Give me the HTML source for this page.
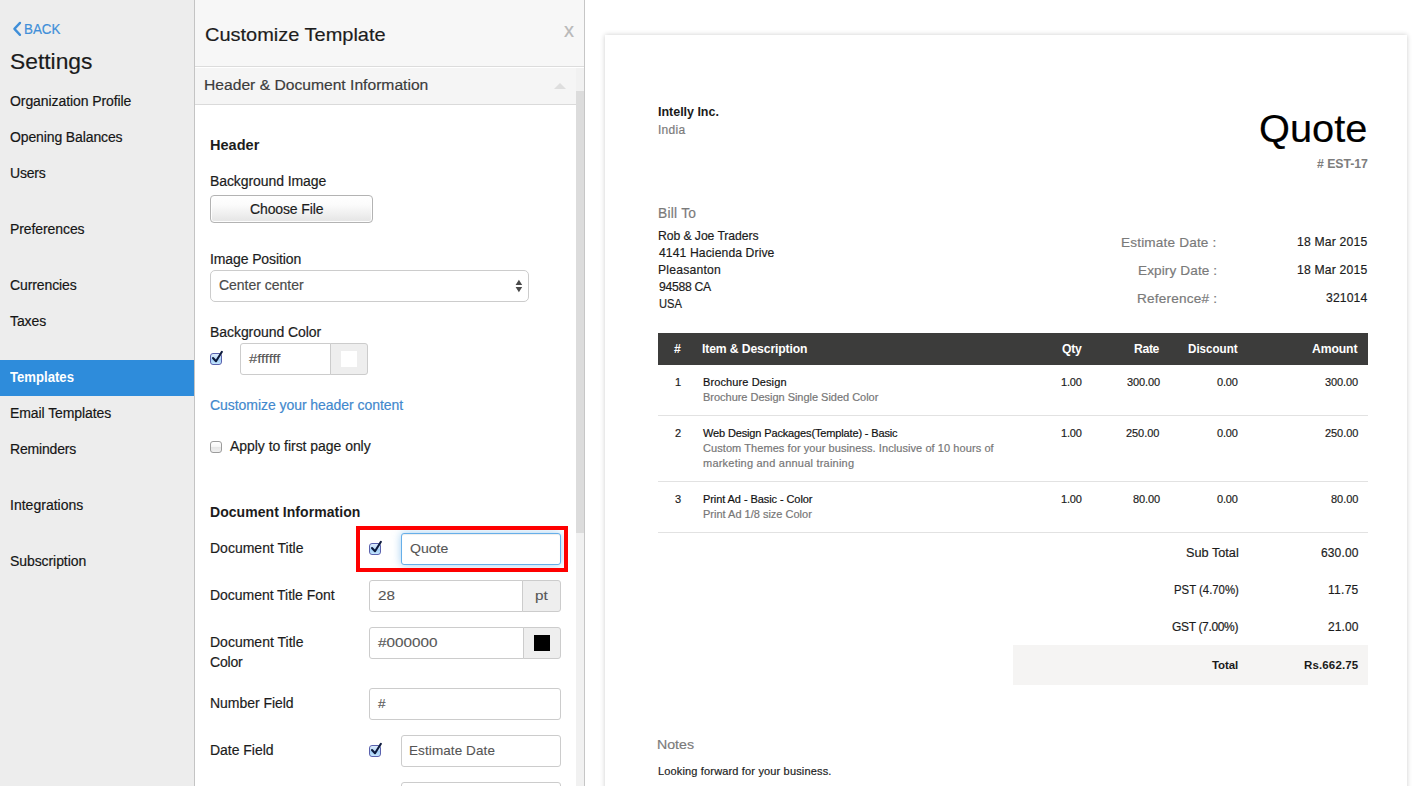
<!DOCTYPE html>
<html>
<head>
<meta charset="utf-8">
<title>Customize Template</title>
<style>
*{box-sizing:border-box;margin:0;padding:0}
html,body{width:1425px;height:786px;overflow:hidden;background:#fff}
body{font-family:"Liberation Sans",sans-serif;font-size:14px;line-height:20px;color:#222;position:relative}
div,svg{position:absolute}
.t{white-space:nowrap;line-height:20px;height:20px;transform-origin:0 0;-webkit-text-stroke:0.18px}
.inp{height:32px;border:1px solid #ccc;background:#fff;border-radius:3px}
.addon{height:32px;border:1px solid #ccc;background:#eee;border-radius:0 3px 3px 0}
.cb{width:12px;height:12px;border:1px solid #9c9c9c;border-radius:3px;background:linear-gradient(#ffffff 0%,#f6f6f6 45%,#e6e6e6 55%,#f0f0f0 100%)}
.cb.on{border-color:#5a62ae;background:linear-gradient(#dcebfb 0%,#b9dafa 50%,#a3d0f8 55%,#c4e6fd 100%)}
.cb svg{left:-1px;top:-1px;overflow:visible}
</style>
</head>
<body>
<!-- sidebar -->
<div style="left:0;top:0;width:194px;height:786px;background:#ededed"></div>
<div style="left:194px;top:0;width:1px;height:786px;background:#c4c4c4"></div>
<div style="left:0;top:360px;width:194px;height:36px;background:#2e8cdb"></div>
<svg style="left:12px;top:21px" width="10" height="16" viewBox="0 0 10 16"><path d="M8 1.9 L2.4 7.9 L8 13.9" fill="none" stroke="#3f8fd9" stroke-width="2.3" stroke-linecap="round" stroke-linejoin="round"/></svg>
<!-- panel -->
<div style="left:195px;top:0;width:389px;height:66px;background:#f7f7f7"></div>
<div style="left:195px;top:66px;width:389px;height:1px;background:#dcdcdc"></div>
<div style="left:195px;top:68px;width:381px;height:36px;background:#f5f5f5"></div>
<div style="left:195px;top:104px;width:381px;height:1px;background:#dadada"></div>
<div style="left:576px;top:68px;width:8px;height:718px;background:#f1f1f1"></div>
<div style="left:576px;top:91px;width:8px;height:442px;background:#dcdcdc"></div>
<div style="left:584px;top:0;width:1px;height:786px;background:#c6c6c6"></div>
<div style="left:554px;top:83px;width:0;height:0;border-left:6px solid transparent;border-right:6px solid transparent;border-bottom:6px solid #dedede"></div>
<!-- header section -->
<div style="left:210px;top:195px;width:163px;height:28px;border:1px solid #b3b3b3;border-radius:4px;background:linear-gradient(#ffffff 0%,#fbfbfb 35%,#ededed 75%,#e4e4e4 100%);box-shadow:inset 0 0 0 1px rgba(255,255,255,.9)"></div>
<div class="inp" style="left:210px;top:270px;width:319px;border-radius:5px"></div>
<svg style="left:510px;top:275px" width="16" height="22" viewBox="0 0 16 22"><path d="M8.9 4.7 L12.2 10 L5.6 10Z M5.6 12 L12.2 12 L8.9 17.3Z" fill="#4a4a4a"/></svg>
<div class="cb on" style="left:210px;top:353px"><svg width="12" height="12" viewBox="0 0 12 12"><path d="M3.0 5.1 L6.0 8.2 L11.9 -1.2" fill="none" stroke="#0d1a3c" stroke-width="2.1" stroke-linecap="round" stroke-linejoin="round"/></svg></div>
<div class="inp" style="left:240px;top:343px;width:91px;border-radius:3px 0 0 3px"></div>
<div class="addon" style="left:330px;top:343px;width:38px"><div style="left:10px;top:7px;width:16px;height:16px;background:#fff"></div></div>
<div class="cb" style="left:210px;top:441px"></div>
<!-- document information -->
<div class="cb on" style="left:369px;top:543px"><svg width="12" height="12" viewBox="0 0 12 12"><path d="M3.0 5.1 L6.0 8.2 L11.9 -1.2" fill="none" stroke="#0d1a3c" stroke-width="2.1" stroke-linecap="round" stroke-linejoin="round"/></svg></div>
<div class="inp" style="left:401px;top:533px;width:160px;border-color:#66afe9;box-shadow:inset 0 1px 1px rgba(0,0,0,.075),0 0 8px rgba(102,175,233,.6)"></div>
<div style="left:356px;top:526px;width:212px;height:46px;border:4px solid #fe0000"></div>
<div class="inp" style="left:369px;top:580px;width:154px;border-radius:3px 0 0 3px"></div>
<div class="addon" style="left:522px;top:580px;width:39px"></div>
<div class="inp" style="left:369px;top:627px;width:155px;border-radius:3px 0 0 3px"></div>
<div class="addon" style="left:523px;top:627px;width:38px"><div style="left:10px;top:7px;width:16px;height:16px;background:#000"></div></div>
<div class="inp" style="left:369px;top:688px;width:192px"></div>
<div class="cb on" style="left:369px;top:745px"><svg width="12" height="12" viewBox="0 0 12 12"><path d="M3.0 5.1 L6.0 8.2 L11.9 -1.2" fill="none" stroke="#0d1a3c" stroke-width="2.1" stroke-linecap="round" stroke-linejoin="round"/></svg></div>
<div class="inp" style="left:401px;top:735px;width:160px"></div>
<div class="inp" style="left:401px;top:782px;width:160px"></div>
<!-- paper -->
<div style="left:605px;top:35px;width:802px;height:800px;background:#fff;box-shadow:0 0 5px rgba(0,0,0,.2)"></div>
<div style="left:658px;top:333px;width:710px;height:32px;background:#3c3c3b"></div>
<div style="left:658px;top:415px;width:710px;height:1px;background:#e2e2e2"></div>
<div style="left:658px;top:481px;width:710px;height:1px;background:#e2e2e2"></div>
<div style="left:658px;top:532px;width:710px;height:1px;background:#e2e2e2"></div>
<div style="left:1013px;top:645px;width:355px;height:40px;background:#f5f4f3"></div>
<!-- text -->
<div class="t" style="left:23.75px;top:19px;font-size:14px;color:#3f8fd9;transform:scaleX(0.9543);">BACK</div>
<div class="t" style="left:9.67px;top:52px;font-size:22px;color:#1b1b1b;transform:scaleX(1.0373);">Settings</div>
<div class="t" style="left:10.00px;top:91px;font-size:14px;color:#161616;letter-spacing:-0.082px;">Organization Profile</div>
<div class="t" style="left:10.00px;top:127px;font-size:14px;color:#161616;letter-spacing:-0.121px;">Opening Balances</div>
<div class="t" style="left:10.00px;top:163px;font-size:14px;color:#161616;letter-spacing:-0.190px;">Users</div>
<div class="t" style="left:10.00px;top:219px;font-size:14px;color:#161616;letter-spacing:-0.088px;">Preferences</div>
<div class="t" style="left:10.00px;top:275px;font-size:14px;color:#161616;letter-spacing:-0.099px;">Currencies</div>
<div class="t" style="left:10.00px;top:311px;font-size:14px;color:#161616;letter-spacing:-0.093px;">Taxes</div>
<div class="t" style="left:10.00px;top:403px;font-size:14px;color:#161616;letter-spacing:-0.086px;">Email Templates</div>
<div class="t" style="left:10.00px;top:439px;font-size:14px;color:#161616;letter-spacing:-0.186px;">Reminders</div>
<div class="t" style="left:10.00px;top:495px;font-size:14px;color:#161616;letter-spacing:0.013px;">Integrations</div>
<div class="t" style="left:10.00px;top:551px;font-size:14px;color:#161616;letter-spacing:-0.078px;">Subscription</div>
<div class="t" style="left:10.00px;top:367px;font-size:14px;color:#fff;transform:scaleX(0.9376);font-weight:bold;-webkit-text-stroke:0;">Templates</div>
<div class="t" style="left:204.65px;top:25px;font-size:19px;color:#1d1d1d;transform:scaleX(1.0513);">Customize Template</div>
<div class="t" style="left:564.00px;top:20px;font-size:20px;color:#b9b9b9;">x</div>
<div class="t" style="left:204.32px;top:75px;font-size:14.7px;color:#3c3c3c;transform:scaleX(1.0650);">Header &amp; Document Information</div>
<div class="t" style="left:210.07px;top:135px;font-size:14px;color:#1c1c1c;transform:scaleX(1.0383);font-weight:bold;-webkit-text-stroke:0;">Header</div>
<div class="t" style="left:210.00px;top:171px;font-size:14px;color:#1c1c1c;letter-spacing:-0.089px;">Background Image</div>
<div class="t" style="left:250.00px;top:199px;font-size:14px;color:#1c1c1c;letter-spacing:-0.122px;">Choose File</div>
<div class="t" style="left:210.00px;top:249px;font-size:14px;color:#1c1c1c;letter-spacing:-0.109px;">Image Position</div>
<div class="t" style="left:219.00px;top:275px;font-size:14px;color:#4a4a4a;letter-spacing:-0.022px;">Center center</div>
<div class="t" style="left:210.00px;top:322px;font-size:14px;color:#1c1c1c;letter-spacing:-0.060px;">Background Color</div>
<div class="t" style="left:249.30px;top:349px;font-size:13.5px;color:#555;transform:scaleX(1.0921);-webkit-text-stroke:0.1px;">#ffffff</div>
<div class="t" style="left:210.00px;top:395px;font-size:14px;color:#4288cd;letter-spacing:-0.052px;">Customize your header content</div>
<div class="t" style="left:230.00px;top:436px;font-size:14px;color:#1c1c1c;letter-spacing:-0.041px;">Apply to first page only</div>
<div class="t" style="left:210.00px;top:502px;font-size:14px;color:#1c1c1c;letter-spacing:0.054px;font-weight:bold;-webkit-text-stroke:0;">Document Information</div>
<div class="t" style="left:210.00px;top:538px;font-size:14px;color:#1c1c1c;letter-spacing:0.005px;">Document Title</div>
<div class="t" style="left:409.57px;top:539px;font-size:13.5px;color:#555;transform:scaleX(1.0430);-webkit-text-stroke:0.1px;">Quote</div>
<div class="t" style="left:210.00px;top:585px;font-size:14px;color:#1c1c1c;letter-spacing:-0.041px;">Document Title Font</div>
<div class="t" style="left:377.52px;top:586px;font-size:13.5px;color:#555;transform:scaleX(1.1288);-webkit-text-stroke:0.1px;">28</div>
<div class="t" style="left:534.89px;top:586px;font-size:13.5px;color:#555;transform:scaleX(1.1337);-webkit-text-stroke:0.1px;">pt</div>
<div class="t" style="left:210.00px;top:632px;font-size:14px;color:#1c1c1c;letter-spacing:0.005px;">Document Title</div>
<div class="t" style="left:378.20px;top:633px;font-size:13.5px;color:#555;transform:scaleX(1.1297);-webkit-text-stroke:0.1px;">#000000</div>
<div class="t" style="left:210.00px;top:652px;font-size:14px;color:#1c1c1c;letter-spacing:-0.198px;">Color</div>
<div class="t" style="left:210.00px;top:693px;font-size:14px;color:#1c1c1c;letter-spacing:-0.040px;">Number Field</div>
<div class="t" style="left:378.00px;top:694px;font-size:13.5px;color:#555;-webkit-text-stroke:0.1px;">#</div>
<div class="t" style="left:210.00px;top:740px;font-size:14px;color:#1c1c1c;letter-spacing:-0.025px;">Date Field</div>
<div class="t" style="left:409.00px;top:741px;font-size:13.5px;color:#555;letter-spacing:0.094px;-webkit-text-stroke:0.1px;">Estimate Date</div>
<div class="t" style="left:658.00px;top:102px;font-size:12.5px;color:#1a1a1a;letter-spacing:-0.023px;font-weight:bold;-webkit-text-stroke:0;">Intelly Inc.</div>
<div class="t" style="left:658.00px;top:120px;font-size:12px;color:#7a7a7a;letter-spacing:0.288px;">India</div>
<div class="t" style="left:1259.34px;top:119px;font-size:39.2px;color:#000;transform:scaleX(1.0143);">Quote</div>
<div class="t" style="left:1317.00px;top:154px;font-size:12.3px;color:#7d7d7d;letter-spacing:-0.046px;font-weight:bold;-webkit-text-stroke:0;"># EST-17</div>
<div class="t" style="left:658.00px;top:204px;font-size:13.8px;color:#7a7a7a;letter-spacing:0.245px;">Bill To</div>
<div class="t" style="left:658.00px;top:226px;font-size:12.2px;color:#1c1c1c;letter-spacing:-0.064px;">Rob &amp; Joe Traders</div>
<div class="t" style="left:659.00px;top:243px;font-size:12.2px;color:#1c1c1c;letter-spacing:0.087px;">4141 Hacienda Drive</div>
<div class="t" style="left:658.00px;top:260px;font-size:12.2px;color:#1c1c1c;letter-spacing:0.211px;">Pleasanton</div>
<div class="t" style="left:659.00px;top:277px;font-size:12.2px;color:#1c1c1c;letter-spacing:-0.281px;">94588 CA</div>
<div class="t" style="left:658.58px;top:294px;font-size:12.2px;color:#1c1c1c;transform:scaleX(0.9165);">USA</div>
<div class="t" style="left:1121.00px;top:233px;font-size:13.6px;color:#7a7a7a;letter-spacing:0.168px;">Estimate Date :</div>
<div class="t" style="left:1138.00px;top:261px;font-size:13.6px;color:#7a7a7a;letter-spacing:0.106px;">Expiry Date :</div>
<div class="t" style="left:1137.00px;top:289px;font-size:13.6px;color:#7a7a7a;letter-spacing:0.195px;">Reference# :</div>
<div class="t" style="left:1297.00px;top:232px;font-size:12.2px;color:#1c1c1c;letter-spacing:0.186px;">18 Mar 2015</div>
<div class="t" style="left:1297.00px;top:260px;font-size:12.2px;color:#1c1c1c;letter-spacing:0.186px;">18 Mar 2015</div>
<div class="t" style="left:1326.00px;top:288px;font-size:12.2px;color:#1c1c1c;letter-spacing:0.123px;">321014</div>
<div class="t" style="left:674.00px;top:339px;font-size:12.2px;color:#fff;font-weight:bold;-webkit-text-stroke:0;">#</div>
<div class="t" style="left:702.00px;top:339px;font-size:12.2px;color:#fff;letter-spacing:-0.125px;font-weight:bold;-webkit-text-stroke:0;">Item &amp; Description</div>
<div class="t" style="left:1062.00px;top:339px;font-size:12.2px;color:#fff;letter-spacing:-0.266px;font-weight:bold;-webkit-text-stroke:0;">Qty</div>
<div class="t" style="left:1134.00px;top:339px;font-size:12.2px;color:#fff;letter-spacing:-0.344px;font-weight:bold;-webkit-text-stroke:0;">Rate</div>
<div class="t" style="left:1188.14px;top:339px;font-size:12.2px;color:#fff;transform:scaleX(0.9518);font-weight:bold;-webkit-text-stroke:0;">Discount</div>
<div class="t" style="left:1312.00px;top:339px;font-size:12.2px;color:#fff;letter-spacing:-0.114px;font-weight:bold;-webkit-text-stroke:0;">Amount</div>
<div class="t" style="left:675.00px;top:372px;font-size:11px;color:#1c1c1c;">1</div>
<div class="t" style="left:703.00px;top:372px;font-size:11px;color:#111;letter-spacing:0.113px;">Brochure Design</div>
<div class="t" style="left:703.00px;top:387px;font-size:11px;color:#767676;letter-spacing:-0.022px;">Brochure Design Single Sided Color</div>
<div class="t" style="left:1061.00px;top:372px;font-size:11px;color:#1c1c1c;letter-spacing:-0.164px;">1.00</div>
<div class="t" style="left:1127.00px;top:372px;font-size:11px;color:#1c1c1c;letter-spacing:-0.085px;">300.00</div>
<div class="t" style="left:1217.00px;top:372px;font-size:11px;color:#1c1c1c;letter-spacing:-0.164px;">0.00</div>
<div class="t" style="left:1325.00px;top:372px;font-size:11px;color:#1c1c1c;letter-spacing:-0.085px;">300.00</div>
<div class="t" style="left:675.00px;top:423px;font-size:11px;color:#1c1c1c;">2</div>
<div class="t" style="left:703.00px;top:423px;font-size:11px;color:#111;letter-spacing:-0.142px;">Web Design Packages(Template) - Basic</div>
<div class="t" style="left:703.00px;top:438px;font-size:11px;color:#767676;letter-spacing:0.073px;">Custom Themes for your business. Inclusive of 10 hours of</div>
<div class="t" style="left:703.00px;top:453px;font-size:11px;color:#767676;letter-spacing:0.217px;">marketing and annual training</div>
<div class="t" style="left:1061.00px;top:423px;font-size:11px;color:#1c1c1c;letter-spacing:-0.164px;">1.00</div>
<div class="t" style="left:1126.00px;top:423px;font-size:11px;color:#1c1c1c;letter-spacing:-0.065px;">250.00</div>
<div class="t" style="left:1217.00px;top:423px;font-size:11px;color:#1c1c1c;letter-spacing:-0.164px;">0.00</div>
<div class="t" style="left:1325.00px;top:423px;font-size:11px;color:#1c1c1c;letter-spacing:-0.065px;">250.00</div>
<div class="t" style="left:675.00px;top:489px;font-size:11px;color:#1c1c1c;">3</div>
<div class="t" style="left:703.00px;top:489px;font-size:11px;color:#111;letter-spacing:-0.078px;">Print Ad - Basic - Color</div>
<div class="t" style="left:703.00px;top:504px;font-size:11px;color:#767676;">Print Ad 1/8 size Color</div>
<div class="t" style="left:1061.00px;top:489px;font-size:11px;color:#1c1c1c;letter-spacing:-0.164px;">1.00</div>
<div class="t" style="left:1133.00px;top:489px;font-size:11px;color:#1c1c1c;letter-spacing:-0.077px;">80.00</div>
<div class="t" style="left:1217.00px;top:489px;font-size:11px;color:#1c1c1c;letter-spacing:-0.164px;">0.00</div>
<div class="t" style="left:1331.00px;top:489px;font-size:11px;color:#1c1c1c;letter-spacing:-0.027px;">80.00</div>
<div class="t" style="left:1185.87px;top:543px;font-size:12px;color:#1c1c1c;transform:scaleX(1.0581);">Sub Total</div>
<div class="t" style="left:1321.00px;top:543px;font-size:12px;color:#1c1c1c;letter-spacing:0.134px;">630.00</div>
<div class="t" style="left:1173.65px;top:580px;font-size:12px;color:#1c1c1c;transform:scaleX(0.9464);">PST (4.70%)</div>
<div class="t" style="left:1328.00px;top:580px;font-size:12px;color:#1c1c1c;letter-spacing:0.284px;">11.75</div>
<div class="t" style="left:1172.00px;top:617px;font-size:12px;color:#1c1c1c;letter-spacing:-0.342px;">GST (7.00%)</div>
<div class="t" style="left:1328.00px;top:617px;font-size:12px;color:#1c1c1c;letter-spacing:0.086px;">21.00</div>
<div class="t" style="left:1212.00px;top:655px;font-size:11.5px;color:#1a1a1a;letter-spacing:-0.080px;font-weight:bold;-webkit-text-stroke:0;">Total</div>
<div class="t" style="left:1304.00px;top:655px;font-size:11.5px;color:#1a1a1a;letter-spacing:0.141px;font-weight:bold;-webkit-text-stroke:0;">Rs.662.75</div>
<div class="t" style="left:657.44px;top:735px;font-size:13.4px;color:#7a7a7a;transform:scaleX(1.0573);">Notes</div>
<div class="t" style="left:658.00px;top:761px;font-size:11px;color:#1c1c1c;letter-spacing:0.158px;">Looking forward for your business.</div>
</body>
</html>
